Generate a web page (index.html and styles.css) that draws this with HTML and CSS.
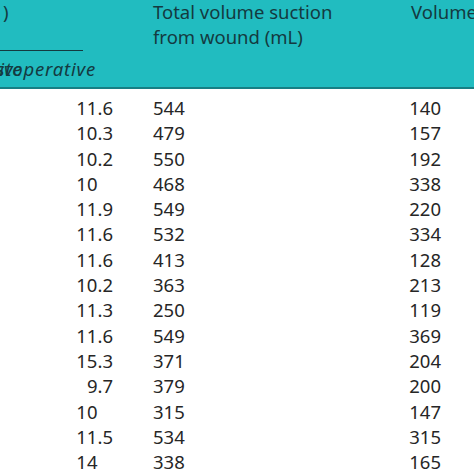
FILE: index.html
```html
<!DOCTYPE html>
<html>
<head>
<meta charset="utf-8">
<link rel="stylesheet" href="styles.css">
</head>
<body>
<div class="table">
  <div class="head">
    <div class="hcell first">
      <div class="group">)</div>
      <div class="sub">
        <span class="prev">Preoperative</span>
        <span class="post">Postoperative</span>
      </div>
    </div>
    <div class="hcell">Total volume suction<br>from wound (mL)</div>
    <div class="hcell last">Volume</div>
  </div>
  <div class="body">
    <div class="row"><span class="c1">11.6</span><span class="c2">544</span><span class="c3">140</span></div>
    <div class="row"><span class="c1">10.3</span><span class="c2">479</span><span class="c3">157</span></div>
    <div class="row"><span class="c1">10.2</span><span class="c2">550</span><span class="c3">192</span></div>
    <div class="row"><span class="c1 int">10</span><span class="c2">468</span><span class="c3">338</span></div>
    <div class="row"><span class="c1">11.9</span><span class="c2">549</span><span class="c3">220</span></div>
    <div class="row"><span class="c1">11.6</span><span class="c2">532</span><span class="c3">334</span></div>
    <div class="row"><span class="c1">11.6</span><span class="c2">413</span><span class="c3">128</span></div>
    <div class="row"><span class="c1">10.2</span><span class="c2">363</span><span class="c3">213</span></div>
    <div class="row"><span class="c1">11.3</span><span class="c2">250</span><span class="c3">119</span></div>
    <div class="row"><span class="c1">11.6</span><span class="c2">549</span><span class="c3">369</span></div>
    <div class="row"><span class="c1">15.3</span><span class="c2">371</span><span class="c3">204</span></div>
    <div class="row"><span class="c1">9.7</span><span class="c2">379</span><span class="c3">200</span></div>
    <div class="row"><span class="c1 int">10</span><span class="c2">315</span><span class="c3">147</span></div>
    <div class="row"><span class="c1">11.5</span><span class="c2">534</span><span class="c3">315</span></div>
    <div class="row"><span class="c1 int">14</span><span class="c2">338</span><span class="c3">165</span></div>
  </div>
</div>
</body>
</html>
```

FILE: styles.css
```css
html, body {
  margin: 0;
  padding: 0;
  background: #ffffff;
  overflow: hidden;
}
body {
  width: 474px;
  height: 474px;
  font-family: "Noto Sans", sans-serif;
  font-size: 18.5px;
  line-height: 25px;
}
.table {
  width: 474px;
}
.head {
  height: 87px;
  background: #21bcc0;
  border-bottom: 2px solid #177f84;
  color: #143a40;
  display: grid;
  grid-template-columns: 153px 258px 63px;
  overflow: hidden;
}
.hcell {
  white-space: nowrap;
  margin-top: -1px;
}
.hcell.first {
  position: relative;
}
.group {
  width: 83px;
  height: 52px;
  padding-left: 3px;
  box-sizing: border-box;
  border-bottom: 1px solid #143a40;
  margin-bottom: 5px;
}
.sub {
  position: relative;
  height: 25px;
  font-style: italic;
}
.prev {
  position: absolute;
  right: calc(100% - 22px);
  top: 0;
}
.post {
  position: absolute;
  left: -26px;
  top: 0;
  letter-spacing: 0.8px;
}
.hcell.last {
  overflow: visible;
}
.body {
  padding-top: 6px;
  color: #262626;
}
.row {
  display: grid;
  grid-template-columns: 113px 40px 1fr 33px;
  line-height: 25.3px;
  white-space: nowrap;
}
.c1 {
  grid-column: 1;
  text-align: right;
}
.c1.int {
  padding-right: 15.5px;
}
.c2 {
  grid-column: 3;
  grid-row: 1;
  text-align: left;
}
.c3 {
  grid-column: 3;
  grid-row: 1;
  text-align: right;
}
```
